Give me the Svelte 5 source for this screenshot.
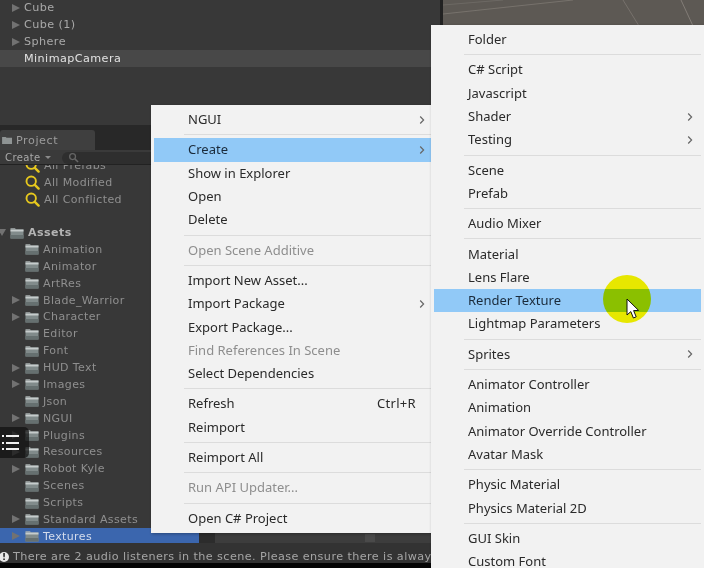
<script>
  const hier = [
    { t: 'Cube', a: true },
    { t: 'Cube (1)', a: true },
    { t: 'Sphere', a: true },
    { t: 'MinimapCamera', sel: true }
  ];
  const tree = [
    ['Animation', 0], ['Animator', 0], ['ArtRes', 0], ['Blade_Warrior', 1], ['Character', 1], ['Editor', 0],
    ['Font', 0], ['HUD Text', 1], ['Images', 1], ['Json', 0], ['NGUI', 1], ['Plugins', 1], ['Resources', 1],
    ['Robot Kyle', 1], ['Scenes', 0], ['Scripts', 0], ['Standard Assets', 1]
  ];
  const menu1 = [
    { t: 'NGUI', sub: 1 }, 0,
    { t: 'Create', sub: 1, hi: 1 }, { t: 'Show in Explorer' }, { t: 'Open' }, { t: 'Delete' }, 0,
    { t: 'Open Scene Additive', dis: 1 }, 0,
    { t: 'Import New Asset...' }, { t: 'Import Package', sub: 1 }, { t: 'Export Package...' },
    { t: 'Find References In Scene', dis: 1 }, { t: 'Select Dependencies' }, 0,
    { t: 'Refresh', key: 'Ctrl+R' }, { t: 'Reimport' }, 0,
    { t: 'Reimport All' }, 0,
    { t: 'Run API Updater...', dis: 1 }, 0,
    { t: 'Open C# Project' }
  ];
  const menu2 = [
    { t: 'Folder' }, 0,
    { t: 'C# Script' }, { t: 'Javascript' }, { t: 'Shader', sub: 1 }, { t: 'Testing', sub: 1 }, 0,
    { t: 'Scene' }, { t: 'Prefab' }, 0,
    { t: 'Audio Mixer' }, 0,
    { t: 'Material' }, { t: 'Lens Flare' }, { t: 'Render Texture', hi: 1 }, { t: 'Lightmap Parameters' }, 0,
    { t: 'Sprites', sub: 1 }, 0,
    { t: 'Animator Controller' }, { t: 'Animation' }, { t: 'Animator Override Controller' }, { t: 'Avatar Mask' }, 0,
    { t: 'Physic Material' }, { t: 'Physics Material 2D' }, 0,
    { t: 'GUI Skin' }, { t: 'Custom Font' }
  ];
</script>

{#snippet folder()}
  <svg class="folder" viewBox="0 0 14 12" aria-hidden="true">
    <path d="M0.5 2.5 L0.5 1.2 L5 1.2 L6 2.5 Z" fill="#aab1b1" />
    <rect x="0.5" y="2.5" width="13" height="9" fill="#818b8b" />
    <rect x="0.5" y="2.5" width="13" height="2" fill="#c6cccc" />
    <rect x="0.5" y="8" width="13" height="3.5" fill="#667070" />
  </svg>
{/snippet}

{#snippet lens()}
  <svg class="lens" viewBox="0 0 15 15" aria-hidden="true">
    <circle cx="6.2" cy="6.2" r="4.7" fill="none" stroke="#e6c81e" stroke-width="1.9" />
    <path d="M9.8 9.8 L13.6 13.6" stroke="#e6c81e" stroke-width="2.4" stroke-linecap="round" />
  </svg>
{/snippet}

{#snippet menu(items)}
  {#each items as it}
    {#if it === 0}
      <div class="sep"></div>
    {:else}
      <div class="item" class:hi={it.hi} class:dis={it.dis}>
        <span class="label">{it.t}</span>
        {#if it.key}<span class="key">{it.key}</span>{/if}
        {#if it.sub}
          <svg class="chev" viewBox="0 0 6 10" aria-hidden="true"><path d="M1.2 1.5 L4.6 5 L1.2 8.5" fill="none" stroke="#666" stroke-width="1.2" /></svg>
        {/if}
      </div>
    {/if}
  {/each}
{/snippet}

<div class="screen">
  <div class="main">
    <div class="left">
      <section class="hier">
        {#each hier as h}
          <div class="hrow" class:hsel={h.sel}>
            {#if h.a}<span class="tri"></span>{/if}
            <span class="hname">{h.t}</span>
          </div>
        {/each}
      </section>

      <section class="project">
        <div class="tabs">
          <div class="tab">
            <svg class="tabicon" viewBox="0 0 12 10" aria-hidden="true"><path d="M0 1 H4 L5 2 H11 V9 H0 Z" fill="#8f9494" /></svg>
            Project
          </div>
        </div>
        <div class="toolbar">
          <span class="create">Create <i class="down"></i></span>
          <span class="search">
            <svg viewBox="0 0 12 12" aria-hidden="true"><circle cx="5" cy="5" r="3.2" fill="none" stroke="#666" stroke-width="1.4" /><path d="M7.5 7.5 L11 11" stroke="#666" stroke-width="1.6" /></svg>
          </span>
        </div>
        <div class="tree">
          <div class="favs">
            <div class="frow">{@render lens()}<span>All Prefabs</span></div>
            <div class="frow">{@render lens()}<span>All Modified</span></div>
            <div class="frow">{@render lens()}<span>All Conflicted</span></div>
          </div>
          <div class="assets">
            <span class="tridown"></span>
            {@render folder()}
            <b>Assets</b>
          </div>
          {#each tree as [name, arrow]}
            <div class="trow">
              <span class="slot">{#if arrow}<span class="tri"></span>{/if}</span>
              {@render folder()}
              <span class="tname">{name}</span>
            </div>
          {/each}
          <div class="lastline">
            <div class="trow tsel">
              <span class="slot"><span class="tri"></span></span>
              {@render folder()}
              <span class="tname">Textures</span>
            </div>
            <div class="sizer"></div>
            <div class="slider"><i></i></div>
          </div>
        </div>
      </section>
    </div>
    <div class="divider"></div>
    <section class="scene">
      <svg class="gridlines" viewBox="0 0 261 130" preserveAspectRatio="none" aria-hidden="true">
        <path d="M0 14 L130 0" stroke="#77726c" stroke-width="1" fill="none" />
        <path d="M0 5 L60 0" stroke="#6d6964" stroke-width="1" fill="none" />
        <path d="M180 0 L196 26" stroke="#77726c" stroke-width="1" fill="none" />
        <path d="M238 0 L250 26" stroke="#827d77" stroke-width="1" fill="none" />
      </svg>
    </section>
  </div>
  <div class="status">
    <span class="warn">!</span>
    <span class="msg">There are 2 audio listeners in the scene. Please ensure there is always exactly one audio listener in the scene.</span>
  </div>
  <div class="black"></div>

  <div class="fab" aria-hidden="true">
    <span></span><span></span><span></span>
  </div>

  <nav class="menu m1">{@render menu(menu1)}</nav>
  <nav class="menu m2">{@render menu(menu2)}</nav>

  <div class="spot"></div>
  <svg class="cursor" viewBox="0 0 14 22" aria-hidden="true">
    <path d="M1 1 L1 17 L4.8 13.6 L7.4 20 L10.2 18.8 L7.6 12.6 L12.6 12.4 Z" fill="#fff" stroke="#111" stroke-width="1" stroke-linejoin="round" />
  </svg>
</div>

<style>
  :global(body) { margin: 0; background: #000; }
  .screen {
    position: relative;
    width: 704px;
    height: 568px;
    overflow: hidden;
    display: flex;
    flex-direction: column;
    background: #383838;
    font-family: "DejaVu Sans", sans-serif;
    filter: blur(0.5px);
  }
  .main { display: flex; height: 543px; flex: none; }
  .left { width: 440px; display: flex; flex-direction: column; flex: none; }
  .divider { width: 3px; background: #222; flex: none; }
  .scene { flex: 1; background: #5d5954; position: relative; }
  .gridlines { position: absolute; inset: 0; width: 100%; height: 130px; }

  .hier { height: 126px; flex: none; background: #383838; margin-top: -1px; }
  .hrow {
    height: 17px;
    display: flex;
    align-items: center;
    padding-left: 12px;
    font-size: 11.2px;
    letter-spacing: 0.42px;
    color: #a9a9a9;
  }
  .hsel { background: #484848; color: #e2e2e2; padding-left: 20px; }
  .hname { margin-left: 4px; }
  .tri {
    display: block;
    width: 0; height: 0;
    border-left: 8px solid #727272;
    border-top: 4.5px solid transparent;
    border-bottom: 4.5px solid transparent;
  }

  .project { flex: 1; display: flex; flex-direction: column; min-height: 0; }
  .tabs { height: 25px; flex: none; background: #282828; display: flex; align-items: flex-end; }
  .tab {
    width: 95px; height: 20px; box-sizing: border-box;
    background: #3f3f3f; border-radius: 3px 3px 0 0;
    color: #9c9c9c; font-size: 11.2px; letter-spacing: 0.55px;
    display: flex; align-items: center; gap: 3px; padding-left: 2px;
  }
  .tabicon { width: 11px; height: 9px; }
  .toolbar {
    height: 15px; flex: none; background: #3a3a3a;
    display: flex; align-items: center; border-bottom: 1px solid #222; box-sizing: border-box;
    padding-top: 1px;
  }
  .create { width: 62px; padding-left: 5px; box-sizing: border-box; font-size: 10px; letter-spacing: 0.4px; color: #a8a8a8; display: flex; align-items: center; gap: 4px; flex: none; }
  .down { width: 0; height: 0; border-top: 3px solid #8a8a8a; border-left: 3px solid transparent; border-right: 3px solid transparent; }
  .search { flex: 1; height: 12px; margin-right: 8px; background: #2e2e2e; border-radius: 7px; display: flex; align-items: center; padding-left: 6px; }
  .search svg { width: 11px; height: 11px; }

  .tree { flex: 1; background: #383838; min-height: 0; overflow: hidden; font-size: 11px; letter-spacing: 0.38px; color: #8f8f8f; }
  .favs { margin-top: -8px; height: 67px; padding-left: 25px; }
  .frow { height: 17px; display: flex; align-items: center; gap: 4px; }
  .lens { width: 15px; height: 15px; flex: none; }
  .assets { height: 17px; display: flex; align-items: center; color: #b4b4b4; }
  .assets b { margin-left: 4px; letter-spacing: 0.5px; }
  .tridown {
    width: 0; height: 0; margin-left: -2px; margin-right: 4px;
    border-top: 7px solid #727272; border-left: 4px solid transparent; border-right: 4px solid transparent;
  }
  .trow { height: 16.89px; display: flex; align-items: center; }
  .tname { margin-left: 4px; }
  .slot { width: 25px; padding-left: 12px; box-sizing: border-box; flex: none; }
  .folder { width: 14px; height: 12px; flex: none; }
  .lastline { display: flex; height: 17px; }
  .tsel { width: 199px; flex: none; height: 17px; background: #3b66ae; color: #d4dcec; }
  .sizer { width: 16px; flex: none; background: #2c2c2c; }
  .slider { flex: 1; background: #3d3d3d; position: relative; }
  .slider i { position: absolute; left: 150px; top: 6px; width: 10px; height: 8px; background: #4a4a4a; }

  .status {
    height: 20px; flex: none; background: #333;
    display: flex; align-items: center; gap: 4px; overflow: hidden; white-space: nowrap;
    font-size: 11.2px; letter-spacing: 0.42px; color: #a5a5a5;
    box-sizing: border-box; padding-top: 7px;
  }
  .warn {
    width: 10px; height: 10px; margin-left: -1px; border-radius: 50%; background: #e8e8e8; color: #222;
    font-size: 9px; font-weight: bold; line-height: 10px; text-align: center; flex: none; letter-spacing: 0;
  }
  .black { flex: 1; background: #050505; }

  .fab {
    position: absolute; left: 0; top: 427px; width: 29px; height: 31px;
    background: rgba(16,16,16,0.72);
    border-radius: 0 5px 5px 0;
    display: flex; flex-direction: column; justify-content: center; gap: 4.5px;
  }
  .fab span {
    display: block; height: 2px; width: 13px; margin-left: 6px; background: #f0f0f0; position: relative;
  }
  .fab span::before {
    content: ""; position: absolute; left: -4px; top: 0; width: 2px; height: 2px; background: #f0f0f0;
  }

  .menu {
    position: absolute;
    box-sizing: border-box;
    background: #f2f2f2;
    padding: 3px;
    font-family: "Noto Sans", sans-serif;
    font-size: 13px;
    color: #2a2a2a;
    box-shadow: 1px 1px 3px rgba(0,0,0,0.3);
  }
  .m1 { left: 151px; top: 105px; width: 281px; height: 428px; padding-right: 0; }
  .m2 { left: 431px; top: 25px; width: 273px; height: 560px; }
  .item {
    height: 23.3px; display: flex; align-items: center; justify-content: space-between;
    padding: 0 7px 0 34px; box-sizing: border-box; line-height: 1;
  }
  .m2 .item { padding-right: 8px; }
  .hi { background: #91c9f7; color: #1a2a3a; }
  .dis { color: #8e8e8e; }
  .key { color: #2a2a2a; margin-right: 9px; letter-spacing: 0.3px; }
  .chev { width: 6px; height: 10px; }
  .sep { height: 7.02px; display: flex; align-items: center; margin-left: 30px; }
  .sep::after { content: ""; display: block; width: 100%; height: 1px; background: #dcdcdc; }

  .spot {
    position: absolute; left: 603px; top: 275px; width: 48px; height: 48px; border-radius: 50%;
    background: #f4f400; mix-blend-mode: multiply;
  }
  .cursor { position: absolute; left: 626px; top: 298px; width: 14px; height: 22px; }
</style>
